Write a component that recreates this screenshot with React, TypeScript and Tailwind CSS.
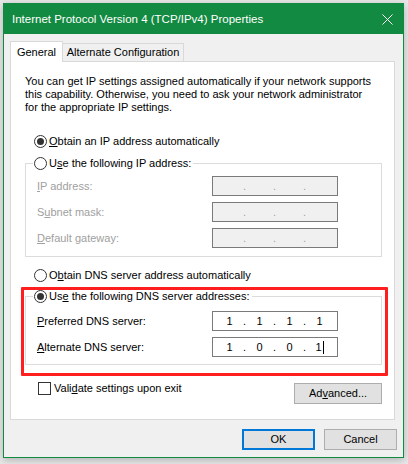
import { Fragment } from "react";

const Radio = ({ checked }: { checked?: boolean }) => (
  <span className="w-[13px] h-[13px] rounded-full border border-[#333333] bg-white flex items-center justify-center shrink-0">
    {checked && <span className="w-[7px] h-[7px] rounded-full bg-[#333333]" />}
  </span>
);

const IpBox = ({
  parts,
  disabled,
  caret,
}: {
  parts: string[];
  disabled?: boolean;
  caret?: boolean;
}) => (
  <div
    className={`w-[126px] h-[20px] border border-[#7a7a7a] flex items-center pl-[3px] ${
      disabled ? "bg-[#f0f0f0] text-[#a0a0a0]" : "bg-white text-black"
    }`}
  >
    {parts.map((p, i) => (
      <Fragment key={i}>
        <span className="w-[27px] flex justify-center items-center">
          {p}
          {caret && i === 3 && <span className="w-[1px] h-[13px] bg-black ml-[1px]" />}
        </span>
        {i < 3 && <span className="w-[3px] text-center">.</span>}
      </Fragment>
    ))}
  </div>
);

const Row = ({
  label,
  disabled,
  parts,
  caret,
  first,
}: {
  label: React.ReactNode;
  disabled?: boolean;
  parts: string[];
  caret?: boolean;
  first?: boolean;
}) => (
  <div className={`flex items-center h-[20px] ${first ? "" : "mt-[6px]"}`}>
    <div className={`w-[179px] pl-[4px] ${disabled ? "text-[#a0a0a0]" : "text-black"}`}>{label}</div>
    <IpBox parts={parts} disabled={disabled} caret={caret} />
  </div>
);

export default function App() {
  const empty = ["", "", "", ""];

  return (
    <div className="w-[408px] h-[464px] bg-[#e9e9e9] pt-[3px] pl-[3px] font-['Liberation_Sans',Arial,sans-serif] text-[11px] leading-[13px] text-black">
      <div className="w-[401px] h-[455px] border border-[#138a41] bg-[#f0f0f0] flex flex-col shadow-[0_2px_8px_rgba(0,0,0,0.25)]">
        {/* title bar */}
        <div className="h-[30px] bg-[#138a41] flex items-center pl-[8px] text-white text-[11.5px] shrink-0">
          <span>Internet Protocol Version 4 (TCP/IPv4) Properties</span>
          <svg className="ml-auto mr-[10px]" width="11" height="11" viewBox="0 0 11 11">
            <path d="M0.5 0.5 L10.5 10.5 M10.5 0.5 L0.5 10.5" stroke="white" strokeWidth="1" fill="none" />
          </svg>
        </div>

        <div className="flex-1 pl-[6px] pr-[6px] pt-[7px] flex flex-col">
          {/* tabs */}
          <div className="flex items-end relative z-10 -mb-px">
            <div className="w-[53px] h-[21px] bg-white border border-b-0 border-[#d9d9d9] flex items-center justify-center">
              General
            </div>
            <div className="w-[121px] h-[19px] bg-[#f0f0f0] border border-l-0 border-[#d9d9d9] flex items-center justify-center">
              Alternate Configuration
            </div>
          </div>

          {/* panel */}
          <div className="relative w-[385px] h-[359px] bg-white border border-[#d9d9d9] pl-[14px] pt-[13px]">
            <p className="whitespace-nowrap">
              You can get IP settings assigned automatically if your network supports
              <br />
              this capability. Otherwise, you need to ask your network administrator
              <br />
              for the appropriate IP settings.
            </p>

            <div className="mt-[21px] h-[13px] flex items-center pl-[9px]">
              <Radio checked />
              <span className="ml-[2px]">
                <u>O</u>btain an IP address automatically
              </span>
            </div>

            <fieldset className="mt-[9px] w-[357px] border border-[#dcdcdc] pl-[7px] pt-[6px] pb-[8px]">
              <legend className="h-[13px] flex items-center pl-[1px] pr-[2px]">
                <Radio />
                <span className="ml-[2px]">
                  U<u>s</u>e the following IP address:
                </span>
              </legend>
              <Row first disabled parts={empty} label={<><u>I</u>P address:</>} />
              <Row disabled parts={empty} label={<>S<u>u</u>bnet mask:</>} />
              <Row disabled parts={empty} label={<><u>D</u>efault gateway:</>} />
            </fieldset>

            <div className="mt-[12px] h-[13px] flex items-center pl-[9px]">
              <Radio />
              <span className="ml-[2px]">
                O<u>b</u>tain DNS server address automatically
              </span>
            </div>

            <fieldset className="mt-[8px] w-[357px] border border-[#dcdcdc] pl-[7px] pt-[8px] pb-[7px]">
              <legend className="h-[13px] flex items-center pl-[1px] pr-[2px]">
                <Radio checked />
                <span className="ml-[2px]">
                  Us<u>e</u> the following DNS server addresses:
                </span>
              </legend>
              <Row first parts={["1", "1", "1", "1"]} label={<><u>P</u>referred DNS server:</>} />
              <Row caret parts={["1", "0", "0", "1"]} label={<><u>A</u>lternate DNS server:</>} />
            </fieldset>

            <div className="mt-[17px] w-[357px] flex items-start">
              <div className="flex items-center h-[13px] ml-[13px]">
                <span className="w-[13px] h-[13px] border border-[#333333] bg-white shrink-0" />
                <span className="ml-[3px]">
                  Vali<u>d</u>ate settings upon exit
                </span>
              </div>
              <button className="ml-auto mt-[1px] w-[88px] h-[21px] bg-[#e1e1e1] border border-[#adadad] flex items-center justify-center">
                Ad<u>v</u>anced...
              </button>
            </div>

            {/* red highlight annotation */}
            <div className="absolute left-[10px] top-[225px] w-[367px] h-[89px] border-[3px] border-[#ff1f1f] rounded-[1px] pointer-events-none" />
          </div>

          {/* footer */}
          <div className="mt-[9px] flex justify-end gap-[9px]">
            <button className="w-[73px] h-[21px] bg-[#e1e1e1] border-2 border-[#0078d7] flex items-center justify-center">
              OK
            </button>
            <button className="w-[73px] h-[21px] bg-[#e1e1e1] border border-[#adadad] flex items-center justify-center">
              Cancel
            </button>
          </div>
        </div>
      </div>
    </div>
  );
}
